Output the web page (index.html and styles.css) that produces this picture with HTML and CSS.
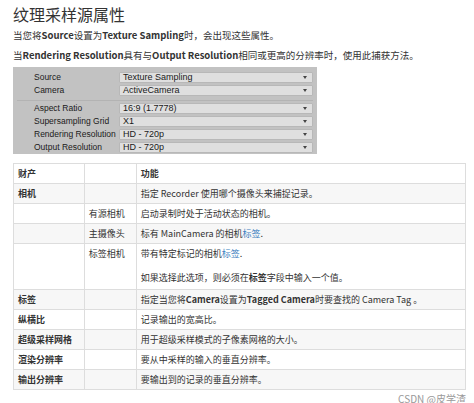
FILE: index.html
```html
<!DOCTYPE html>
<html>
<head>
<meta charset="utf-8">
<link rel="stylesheet" href="styles.css">
</head>
<body>
<div class="page">
  <h1 class="title">纹理采样源属性</h1>
  <p class="para">当您将<b>Source</b>设置为<b>Texture Sampling</b>时，会出现这些属性。</p>
  <p class="para">当<b>Rendering Resolution</b>具有与<b>Output Resolution</b>相同或更高的分辨率时，使用此捕获方法。</p>
  <div class="panel">
    <div class="prow"><span class="plabel">Source</span><span class="dd">Texture Sampling<i class="arr"></i></span></div>
    <div class="prow"><span class="plabel">Camera</span><span class="dd">ActiveCamera<i class="arr"></i></span></div>
    <div class="psep"></div>
    <div class="prow"><span class="plabel">Aspect Ratio</span><span class="dd">16:9 (1.7778)<i class="arr"></i></span></div>
    <div class="prow"><span class="plabel">Supersampling Grid</span><span class="dd">X1<i class="arr"></i></span></div>
    <div class="prow"><span class="plabel">Rendering Resolution</span><span class="dd">HD - 720p<i class="arr"></i></span></div>
    <div class="prow"><span class="plabel">Output Resolution</span><span class="dd">HD - 720p<i class="arr"></i></span></div>
  </div>
  <table class="tbl">
    <colgroup><col class="c1"><col class="c2"><col class="c3"></colgroup>
    <tr class="w"><th>财产</th><th></th><th>功能</th></tr>
    <tr class="g"><td class="b">相机</td><td></td><td>指定 Recorder 使用哪个摄像头来捕捉记录。</td></tr>
    <tr class="w"><td></td><td>有源相机</td><td>启动录制时处于活动状态的相机。</td></tr>
    <tr class="g"><td></td><td>主摄像头</td><td>标有 MainCamera 的相机<span class="lnk">标签</span>.</td></tr>
    <tr class="w tall"><td></td><td>标签相机</td><td><div>带有特定标记的相机<span class="lnk">标签</span>.</div><div class="p2">如果选择此选项，则必须在<b>标签</b>字段中输入一个值。</div></td></tr>
    <tr class="g"><td class="b">标签</td><td></td><td>指定当您将<b>Camera</b>设置为<b>Tagged Camera</b>时要查找的 Camera Tag 。</td></tr>
    <tr class="w"><td class="b">纵横比</td><td></td><td>记录输出的宽高比。</td></tr>
    <tr class="g"><td class="b">超级采样网格</td><td></td><td>用于超级采样模式的子像素网格的大小。</td></tr>
    <tr class="w"><td class="b">渲染分辨率</td><td></td><td>要从中采样的输入的垂直分辨率。</td></tr>
    <tr class="g"><td class="b">输出分辨率</td><td></td><td>要输出到的记录的垂直分辨率。</td></tr>
  </table>
  <div class="wm">CSDN @皮学渣</div>
</div>
</body>
</html>
```
FILE: styles.css
```css
html, body { margin: 0; padding: 0; background: #fff; }
.page {
  padding: 3px 8px 0 13px;
  font-family: "Noto Sans CJK SC", sans-serif;
  color: #333;
}
.title {
  margin: 0;
  font-size: 16px;
  font-weight: 400;
  line-height: 22px;
  color: #333;
}
.para {
  margin: 0;
  font-size: 9.5px;
  line-height: 20px;
  color: #333;
}
.para b { font-weight: 700; }
.panel {
  margin-top: 2px;
  width: 304px;
  background: #c2c2c2;
  padding: 4px 0 1px 0;
  display: flex;
  flex-direction: column;
  gap: 1px;
  font-family: "Liberation Sans", "Noto Sans", sans-serif;
}
.prow {
  display: flex;
  align-items: center;
  height: 12px;
  font-size: 9px;
  color: #1a1a1a;
  white-space: nowrap;
}
.plabel { width: 85px; padding-left: 21px; flex: none; font-size: 8.5px; }
.dd {
  flex: none;
  width: 194px;
  height: 11px;
  background: #dfdfdf;
  border: 1px solid #b8b8b8;
  border-radius: 1px;
  box-sizing: border-box;
  padding-left: 3px;
  line-height: 9px;
  position: relative;
}
.arr {
  position: absolute;
  right: 5px;
  top: 3px;
  width: 0; height: 0;
  border-left: 2.5px solid transparent;
  border-right: 2.5px solid transparent;
  border-top: 3px solid #444;
}
.psep { height: 3px; border-bottom: 1px solid #b3b3b3; margin: 0 4px; }
.tbl {
  margin-top: 9px;
  border-collapse: collapse;
  width: 453px;
  font-size: 9px;
  color: #333;
}
.c1 { width: 71px; } .c2 { width: 52px; } .c3 { width: 330px; }
.tbl th, .tbl td {
  border: 1px solid #ddd;
  height: 19px;
  padding: 0 4px;
  text-align: left;
  vertical-align: middle;
  line-height: 12px;
}
.tbl th, .tbl td.b { font-weight: 700; }
.tbl tr.w { background: #fff; }
.tbl tr.g { background: #f7f7f7; }
.tbl tr.tall td { vertical-align: top; height: 41px; padding-top: 4px; }
.p2 { margin-top: 12px; }
.lnk { color: #3c7fc0; }
.wm {
  text-align: right;
  font-size: 10px;
  color: #999;
  line-height: 13px;
  width: 453px;
  margin-top: 2px;
}
```
